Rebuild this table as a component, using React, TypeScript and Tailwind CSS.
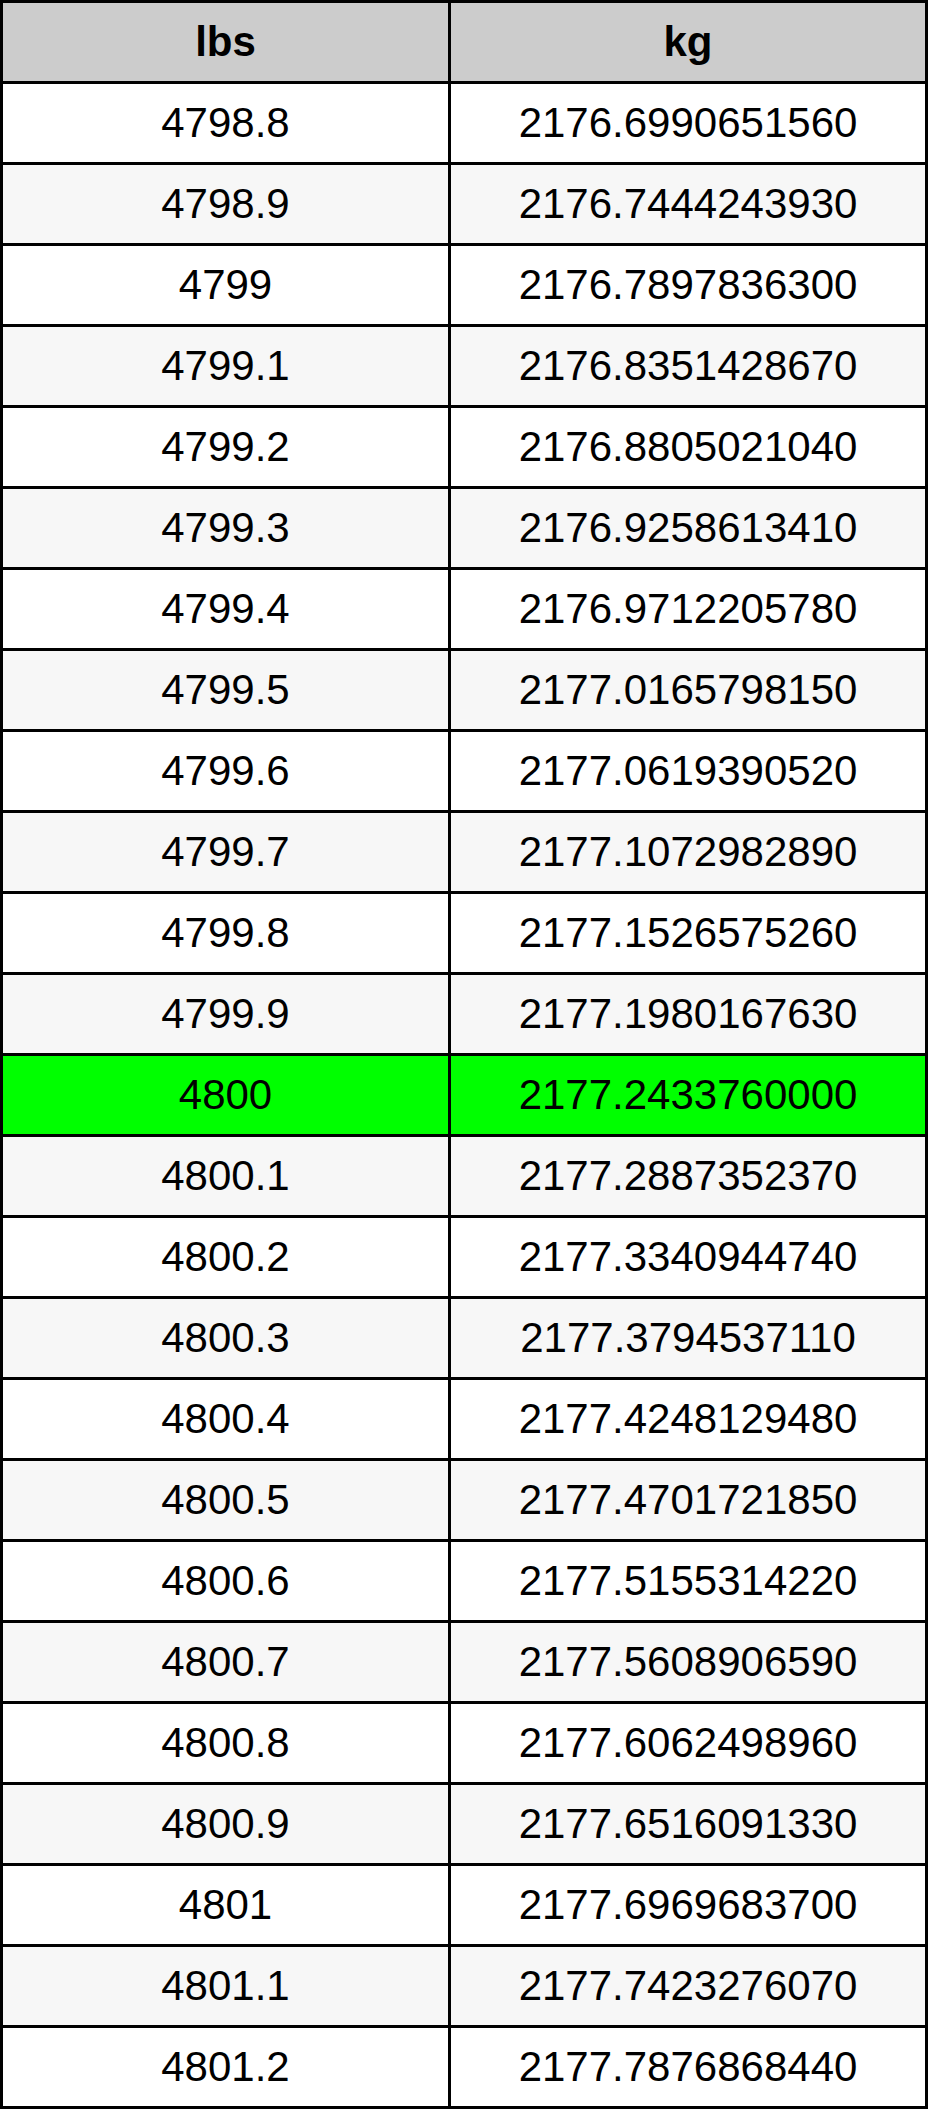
const rows: [string, string][] = [
  ['4798.8', '2176.6990651560'],
  ['4798.9', '2176.7444243930'],
  ['4799', '2176.7897836300'],
  ['4799.1', '2176.8351428670'],
  ['4799.2', '2176.8805021040'],
  ['4799.3', '2176.9258613410'],
  ['4799.4', '2176.9712205780'],
  ['4799.5', '2177.0165798150'],
  ['4799.6', '2177.0619390520'],
  ['4799.7', '2177.1072982890'],
  ['4799.8', '2177.1526575260'],
  ['4799.9', '2177.1980167630'],
  ['4800', '2177.2433760000'],
  ['4800.1', '2177.2887352370'],
  ['4800.2', '2177.3340944740'],
  ['4800.3', '2177.3794537110'],
  ['4800.4', '2177.4248129480'],
  ['4800.5', '2177.4701721850'],
  ['4800.6', '2177.5155314220'],
  ['4800.7', '2177.5608906590'],
  ['4800.8', '2177.6062498960'],
  ['4800.9', '2177.6516091330'],
  ['4801', '2177.6969683700'],
  ['4801.1', '2177.7423276070'],
  ['4801.2', '2177.7876868440'],
];

export default function App() {
  return (
    <div className="bg-white min-h-[2115px] w-[930px] font-['Liberation_Sans',Arial,sans-serif] text-[42px] text-black">
      <div className="w-[928px] border-l-[3px] border-t-[3px] border-black">
        {/* header */}
        <div className="flex bg-[#cccccc] font-bold">
          <div className="w-[448px] h-[81px] pb-[2px] border-r-[3px] border-b-[3px] border-black flex items-center justify-center">
            lbs
          </div>
          <div className="w-[477px] h-[81px] pb-[2px] border-r-[3px] border-b-[3px] border-black flex items-center justify-center">
            kg
          </div>
        </div>

        {rows.map(([lbs, kg], i) => {
          const bg = lbs === '4800' ? 'bg-[#00ff00]' : i % 2 === 1 ? 'bg-[#f7f7f7]' : 'bg-white';
          return (
            <div key={lbs} className={`flex ${bg}`}>
              <div className="w-[448px] h-[81px] pb-[2px] border-r-[3px] border-b-[3px] border-black flex items-center justify-center">
                {lbs}
              </div>
              <div className="w-[477px] h-[81px] pb-[2px] border-r-[3px] border-b-[3px] border-black flex items-center justify-center">
                {kg}
              </div>
            </div>
          );
        })}
      </div>
    </div>
  );
}
